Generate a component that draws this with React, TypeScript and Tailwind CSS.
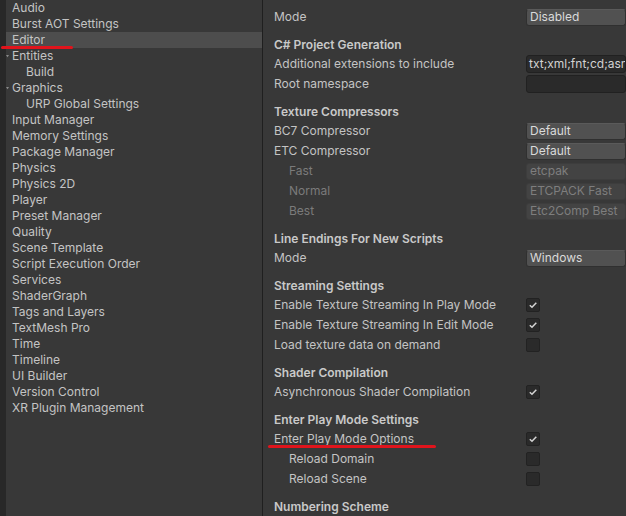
import React from 'react';

type NavItem = { name: string; child?: boolean; fold?: boolean };

const NAV: NavItem[] = [
  { name: 'Audio' },
  { name: 'Burst AOT Settings' },
  { name: 'Editor' },
  { name: 'Entities', fold: true },
  { name: 'Build', child: true },
  { name: 'Graphics', fold: true },
  { name: 'URP Global Settings', child: true },
  { name: 'Input Manager' },
  { name: 'Memory Settings' },
  { name: 'Package Manager' },
  { name: 'Physics' },
  { name: 'Physics 2D' },
  { name: 'Player' },
  { name: 'Preset Manager' },
  { name: 'Quality' },
  { name: 'Scene Template' },
  { name: 'Script Execution Order' },
  { name: 'Services' },
  { name: 'ShaderGraph' },
  { name: 'Tags and Layers' },
  { name: 'TextMesh Pro' },
  { name: 'Time' },
  { name: 'Timeline' },
  { name: 'UI Builder' },
  { name: 'Version Control' },
  { name: 'XR Plugin Management' },
];

type Field = {
  label: string;
  kind: 'select' | 'text' | 'check';
  value?: string;
  checked?: boolean;
  indent?: boolean;
  disabled?: boolean;
};

type Section = { title?: string; fields: Field[] };

const SECTIONS: Section[] = [
  { fields: [{ label: 'Mode', kind: 'select', value: 'Disabled' }] },
  {
    title: 'C# Project Generation',
    fields: [
      { label: 'Additional extensions to include', kind: 'text', value: 'txt;xml;fnt;cd;asmdef;rsp;asmref' },
      { label: 'Root namespace', kind: 'text', value: '' },
    ],
  },
  {
    title: 'Texture Compressors',
    fields: [
      { label: 'BC7 Compressor', kind: 'select', value: 'Default' },
      { label: 'ETC Compressor', kind: 'select', value: 'Default' },
      { label: 'Fast', kind: 'select', value: 'etcpak', indent: true, disabled: true },
      { label: 'Normal', kind: 'select', value: 'ETCPACK Fast', indent: true, disabled: true },
      { label: 'Best', kind: 'select', value: 'Etc2Comp Best', indent: true, disabled: true },
    ],
  },
  {
    title: 'Line Endings For New Scripts',
    fields: [{ label: 'Mode', kind: 'select', value: 'Windows' }],
  },
  {
    title: 'Streaming Settings',
    fields: [
      { label: 'Enable Texture Streaming In Play Mode', kind: 'check', checked: true },
      { label: 'Enable Texture Streaming In Edit Mode', kind: 'check', checked: true },
      { label: 'Load texture data on demand', kind: 'check', checked: false },
    ],
  },
  {
    title: 'Shader Compilation',
    fields: [{ label: 'Asynchronous Shader Compilation', kind: 'check', checked: true }],
  },
  {
    title: 'Enter Play Mode Settings',
    fields: [
      { label: 'Enter Play Mode Options', kind: 'check', checked: true },
      { label: 'Reload Domain', kind: 'check', checked: false, indent: true },
      { label: 'Reload Scene', kind: 'check', checked: false, indent: true },
    ],
  },
  { title: 'Numbering Scheme', fields: [] },
];

function Control({ field }: { field: Field }) {
  if (field.kind === 'check') {
    return (
      <div className="w-[14px] h-[14px] rounded-[2px] bg-[#2a2a2a] border border-[#222222] flex items-center justify-center">
        {field.checked && (
          <svg width="10" height="10" viewBox="0 0 10 10">
            <path d="M1.8 5.2 L4 7.3 L8.3 2.7" fill="none" stroke="#d4d4d4" strokeWidth="1.5" />
          </svg>
        )}
      </div>
    );
  }
  if (field.kind === 'text') {
    return (
      <div className="w-[160px] h-[18px] rounded-[3px] bg-[#2a2a2a] border border-[#212121] pl-[2px] flex items-center whitespace-nowrap overflow-hidden text-[#d2d2d2]">
        {field.value}
      </div>
    );
  }
  return (
    <div
      className={
        field.disabled
          ? 'w-[160px] h-[17px] rounded-[3px] bg-[#434343] border border-[#3d3d3d] pl-[3px] flex items-center whitespace-nowrap text-[#7e7e7e]'
          : 'w-[160px] h-[17px] rounded-[3px] bg-[#515151] border border-[#303030] border-t-[#5a5a5a] pl-[3px] flex items-center whitespace-nowrap text-[#dadada]'
      }
    >
      {field.value}
    </div>
  );
}

export default function App() {
  return (
    <div className="relative w-[626px] h-[516px] overflow-hidden flex bg-[#383838] text-[12px] leading-[16px] text-[#c4c4c4] font-[Inter,sans-serif]">
      <div className="w-[6px] shrink-0 bg-[#282828]" />

      {/* settings list */}
      <div className="w-[256px] shrink-0 bg-[#383838] flex flex-col">
        {NAV.map((item) => (
          <div
            key={item.name}
            className={`h-[16px] flex items-center whitespace-nowrap ${
              item.name === 'Editor' ? 'bg-[#4d4d4d]' : ''
            } ${item.child ? 'pl-[20px]' : 'pl-[6px]'}`}
          >
            {item.fold && (
              <svg width="3" height="3" viewBox="0 0 4 4" className="-ml-[6px] mr-[3px] mt-[1px]">
                <path d="M0 0 L4 0 L2 3 Z" fill="#8a8a8a" />
              </svg>
            )}
            {item.name}
          </div>
        ))}
      </div>

      <div className="w-px shrink-0 bg-[#1f1f1f]" />

      {/* editor settings */}
      <div className="flex-1 min-w-0 overflow-hidden pt-[7px] pl-[11px]">
        {SECTIONS.map((section, i) => (
          <div key={i}>
            {section.title && (
              <div className="mt-[9px] h-[18px] flex items-center font-semibold text-[#c9c9c9] whitespace-nowrap">
                {section.title}
              </div>
            )}
            {section.fields.map((field) => (
              <div key={field.label} className="h-[20px] flex items-center">
                <div
                  className={`w-[252px] shrink-0 whitespace-nowrap ${field.indent ? 'pl-[15px]' : ''} ${
                    field.disabled ? 'text-[#7b7b7b]' : ''
                  }`}
                >
                  {field.label}
                </div>
                <Control field={field} />
              </div>
            ))}
          </div>
        ))}
      </div>

      {/* annotations */}
      <div className="absolute left-[1px] top-[46px] w-[72px] h-[3px] rounded-full bg-[#e0141c]" />
      <div className="absolute left-[268px] top-[445px] w-[168px] h-[3px] rounded-full bg-[#e0141c]" />
    </div>
  );
}
